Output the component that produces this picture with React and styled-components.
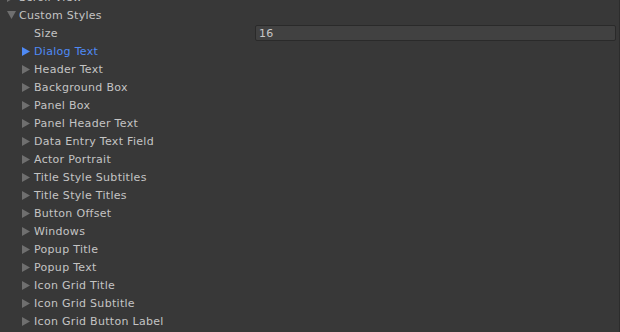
import React from "react"
import styled, { createGlobalStyle } from "styled-components"

const Global = createGlobalStyle`
    html, body {
        margin: 0;
        padding: 0;
        background: #383838;
    }
`

const Panel = styled.div`
    width: 620px;
    height: 332px;
    overflow: hidden;
    background: #383838;
    font-family: "DejaVu Sans", sans-serif;
    font-size: 11px;
    letter-spacing: 0.3px;
    color: #c4c4c4;
    border-right: 1px solid #2c2c2c;
    box-sizing: border-box;
`

const List = styled.div`
    display: flex;
    flex-direction: column;
    margin-top: -12px;
`

const Row = styled.div`
    display: flex;
    align-items: center;
    height: 18px;
    padding-left: ${p => p.$depth * 15 + 7}px;
    color: ${p => (p.$active ? "#4f8af5" : "#c4c4c4")};
    white-space: nowrap;
`

const Arrow = styled.span`
    width: 12px;
    display: flex;
    align-items: center;
    color: ${p => (p.$active ? "#4f8af5" : "#6f6f6f")};
    svg {
        display: block;
    }
`

const Label = styled.span`
    width: ${p => (p.$wide ? "221px" : "auto")};
`

const Field = styled.div`
    flex: 1;
    height: 14px;
    margin-right: 3px;
    background: #414141;
    border: 1px solid #2a2a2a;
    border-radius: 2px;
    color: #c8c8c8;
    padding-left: 3px;
    display: flex;
    align-items: center;
    font-size: 11px;
`

function Triangle({ open }) {
    return open ? (
        <svg width="9" height="8" viewBox="0 0 9 8">
            <path d="M0 0 H9 L4.5 8 Z" fill="currentColor" />
        </svg>
    ) : (
        <svg width="8" height="9" viewBox="0 0 8 9">
            <path d="M0 0 L8 4.5 L0 9 Z" fill="currentColor" />
        </svg>
    )
}

const items = [
    "Dialog Text",
    "Header Text",
    "Background Box",
    "Panel Box",
    "Panel Header Text",
    "Data Entry Text Field",
    "Actor Portrait",
    "Title Style Subtitles",
    "Title Style Titles",
    "Button Offset",
    "Windows",
    "Popup Title",
    "Popup Text",
    "Icon Grid Title",
    "Icon Grid Subtitle",
    "Icon Grid Button Label",
]

export default function App() {
    return (
        <Panel>
            <Global />
            <List>
                <Row $depth={0}>
                    <Arrow><Triangle /></Arrow>
                    <span>Scroll View</span>
                </Row>
                <Row $depth={0}>
                    <Arrow><Triangle open /></Arrow>
                    <span>Custom Styles</span>
                </Row>
                <Row $depth={1}>
                    <Arrow />
                    <Label $wide>Size</Label>
                    <Field>16</Field>
                </Row>
                {items.map((name, i) => (
                    <Row key={name} $depth={1} $active={i == 0}>
                        <Arrow $active={i == 0}><Triangle /></Arrow>
                        <span>{name}</span>
                    </Row>
                ))}
            </List>
        </Panel>
    )
}
